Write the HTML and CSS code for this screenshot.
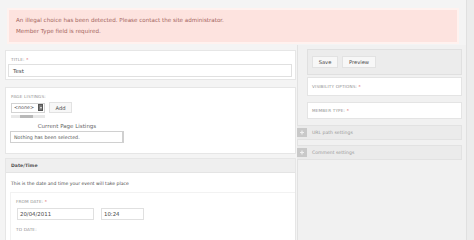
FILE: index.html
```html
<!DOCTYPE html>
<html>
<head>
<meta charset="utf-8">
<link rel="stylesheet" href="styles.css">
</head>
<body>
<div class="page">
  <div class="messages">
    <div>An illegal choice has been detected. Please contact the site administrator.</div>
    <div>Member Type field is required.</div>
  </div>
  <div class="layout">
    <div class="main">
      <div class="panel title-panel">
        <div class="lbl">Title: <span class="req">*</span></div>
        <div class="input wide">Test</div>
      </div>
      <div class="panel listings">
        <div class="lbl">Page listings:</div>
        <div class="row">
          <div class="select">&lt;none&gt;<span class="arrow"></span></div>
          <div class="btn add">Add</div>
        </div>
        <div class="hscroll"><span class="thumb"></span></div>
        <div class="cpl">
          <div class="cpl-title">Current Page Listings</div>
          <div class="cpl-box">Nothing has been selected.</div>
        </div>
      </div>
      <div class="panel datetime">
        <div class="dt-head">Date/Time</div>
        <div class="dt-desc">This is the date and time your event will take place</div>
        <div class="fieldset">
          <div class="lbl">From date: <span class="req">*</span></div>
          <div class="row dt-row">
            <div class="input date">20/04/2011</div>
            <div class="input time">10:24</div>
          </div>
          <div class="lbl">To date:</div>
        </div>
      </div>
    </div>
    <div class="side">
      <div class="actions">
        <div class="btn save">Save</div>
        <div class="btn preview">Preview</div>
      </div>
      <div class="spanel vis"><span class="lbl">Visibility options: <span class="req">*</span></span></div>
      <div class="spanel member"><span class="lbl">Member type: <span class="req">*</span></span></div>
      <div class="collapse url">
        <svg class="plus" width="10" height="9" viewBox="0 0 10 9"><rect width="10" height="9" fill="#c9c9c9"/><path d="M5 2.5v4M3 4.5h4" stroke="#efefef" stroke-width="1.2"/></svg>
        <span>URL path settings</span>
      </div>
      <div class="collapse comment">
        <svg class="plus" width="10" height="9" viewBox="0 0 10 9"><rect width="10" height="9" fill="#c9c9c9"/><path d="M5 2.5v4M3 4.5h4" stroke="#efefef" stroke-width="1.2"/></svg>
        <span>Comment settings</span>
      </div>
    </div>
  </div>
</div>
</body>
</html>
```
FILE: styles.css
```css
* { box-sizing: border-box; margin: 0; padding: 0; }
body {
  background: #ececec;
  font-family: "DejaVu Sans", Verdana, sans-serif;
  color: #555;
  overflow: hidden;
  height: 240px;
}
.page {
  width: 467px;
  height: 240px;
  background: #f4f4f4;
  border-right: 1px solid #e0e0e0;
  padding-top: 8px;
}
.messages {
  margin: 0 7px;
  height: 36px;
  border: 2px solid #fff2ef;
  background: #fde3df;
  color: #a4655e;
  font-size: 5.6px;
  line-height: 11px;
  padding: 5px 7px;
}
.layout {
  display: grid;
  grid-template-columns: 292px 169px;
  margin: 1px 0 0 5px;
  height: 195px;
}
.main { padding-top: 5px; width: 291px; }
.panel {
  background: #fff;
  border: 1px solid #e6e6e6;
}
.lbl {
  text-transform: uppercase;
  font-size: 4.2px;
  line-height: 7px;
  color: #8f8f8f;
  letter-spacing: 0.15px;
}
.req { color: #d4403c; }
.title-panel {
  height: 30px;
  padding: 5px 3px 2px 2px;
}
.title-panel .lbl { padding-left: 3px; margin-bottom: 1px; }
.input {
  border: 1px solid #e0e0e0;
  background: #fff;
  font-size: 5.5px;
  color: #4a4a4a;
  display: flex;
  align-items: center;
  padding-left: 4px;
}
.input.wide { height: 13px; }
.listings {
  margin-top: 7px;
  height: 67px;
  padding: 5px 4px 0 5px;
}
.row { display: flex; align-items: center; }
.listings .row { margin-top: 2px; gap: 4px; }
.select {
  width: 34px;
  height: 10px;
  border: 1px solid #d3d3d3;
  font-size: 4.8px;
  color: #555;
  display: flex;
  align-items: center;
  justify-content: space-between;
  padding: 0 1px 0 2px;
}
.arrow {
  width: 5px;
  height: 7px;
  background: #777;
  border: 1px solid #555;
  position: relative;
}
.arrow::after {
  content: "";
  position: absolute;
  left: 0.5px;
  top: 2px;
  border-left: 1.5px solid transparent;
  border-right: 1.5px solid transparent;
  border-top: 2px solid #eee;
}
.btn {
  height: 11px;
  background: #f7f7f7;
  border: 1px solid #e2e2e2;
  font-size: 5.2px;
  color: #4a4a4a;
  display: flex;
  align-items: center;
  justify-content: center;
}
.add { width: 23px; }
.hscroll {
  width: 34px;
  height: 3px;
  margin-top: 2px;
  background: #e8e8e8;
  position: relative;
}
.thumb {
  position: absolute;
  left: 9px;
  top: 0;
  width: 13px;
  height: 3px;
  background: #b9b9b9;
}
.cpl { width: 114px; margin-left: -1px; margin-top: 4px; }
.cpl-title {
  text-align: center;
  font-size: 5.5px;
  line-height: 8px;
  color: #666;
}
.cpl-box {
  margin-top: 1px;
  height: 12px;
  border: 1px solid #d0d0d0;
  border-right-width: 2px;
  font-size: 4.8px;
  color: #555;
  padding-left: 3px;
  display: flex;
  align-items: center;
}
.datetime {
  margin-top: 4px;
  height: 90px;
}
.dt-head {
  height: 14px;
  background: #efefef;
  border-bottom: 1px solid #e4e4e4;
  font-size: 4.6px;
  font-weight: bold;
  color: #555;
  padding-left: 5px;
  display: flex;
  align-items: center;
}
.dt-desc {
  font-size: 4.6px;
  line-height: 7px;
  margin-top: 7px;
  padding-left: 5px;
  color: #4a4a4a;
}
.fieldset {
  margin: 5px 0 0 4px;
  border: 1px solid #f2f2f2;
  border-right: none;
  padding: 5px 0 0 5px;
  height: 60px;
}
.dt-row { margin: 3px 0 6px 1px; gap: 7px; }
.input.date { width: 77px; height: 12px; font-size: 5.4px; padding-left: 2px; }
.input.time { width: 43px; height: 12px; font-size: 5.4px; padding-left: 2px; }
.side {
  background: #f1f1f1;
  border-left: 1px solid #e2e2e2;
  padding: 4px 4px 0 9px;
}
.actions {
  height: 26px;
  background: #ececec;
  border: 1px solid #e0e0e0;
  padding: 6px 0 0 4px;
  display: flex;
  align-items: flex-start;
  gap: 4px;
}
.save { width: 26px; height: 12px; }
.preview { width: 34px; height: 12px; }
.spanel {
  background: #fff;
  border: 1px solid #e4e4e4;
  padding-left: 4px;
  display: flex;
  align-items: center;
}
.vis { margin-top: 2px; height: 19px; }
.member { margin-top: 6px; height: 17px; }
.collapse {
  margin-left: -10px;
  height: 15px;
  background: #ebebeb;
  border: 1px solid #e2e2e2;
  border-left: none;
  display: flex;
  align-items: center;
  font-size: 4.6px;
  color: #999;
}
.url { margin-top: 6px; }
.comment { margin-top: 5px; }
.plus { flex: none; margin-right: 5px; }
```
